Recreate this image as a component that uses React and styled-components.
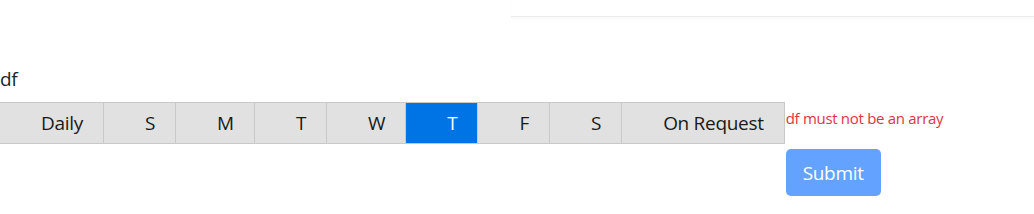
import styled, { createGlobalStyle } from 'styled-components';
import { useState } from 'react';

const GlobalStyle = createGlobalStyle`
    body {
        margin: 0;
        background: #fff;
        font-family: 'Open Sans', 'Liberation Sans', sans-serif;
        color: #212529;
    }
`;

const Header = styled.div`
    display: flex;
    justify-content: flex-end;
    height: 17px;
`;

const HeaderPanel = styled.div`
    width: 523px;
    height: 16px;
    background: #fff;
    border-bottom: 1px solid #ececec;
    box-shadow: 0 2px 2px rgba(0, 0, 0, 0.03);
`;

const Form = styled.form`
    display: flex;
    align-items: flex-start;
    margin-top: 48px;
`;

const Field = styled.div`
    display: flex;
    flex-direction: column;
`;

const Label = styled.label`
    font-size: 19px;
    line-height: 28px;
    height: 28px;
    margin-bottom: 9px;
    letter-spacing: -0.3px;
`;

const Group = styled.div`
    display: flex;
    margin-left: -1px;
`;

const Option = styled.button`
    height: 42px;
    box-sizing: border-box;
    margin: 0 -1px 0 0;
    padding: 0 20px 0 41px;
    border: 1px solid #c9c9c9;
    border-radius: 0;
    background: ${props => props.active ? '#0074e5' : '#e1e1e1'};
    color: ${props => props.active ? '#fff' : '#1a1a1a'};
    font-family: 'Open Sans', 'Liberation Sans', sans-serif;
    font-size: 19px;
    letter-spacing: -0.3px;
    display: flex;
    align-items: center;
    cursor: pointer;

    &:last-child {
        margin-right: 0;
    }
`;

const Side = styled.div`
    display: flex;
    flex-direction: column;
    align-items: flex-start;
    padding-top: 43px;
    margin-left: 1px;
`;

const Error = styled.div`
    color: #dc3545;
    font-size: 15px;
    line-height: 20px;
    letter-spacing: -0.3px;
`;

const Submit = styled.button`
    margin-top: 21px;
    height: 47px;
    width: 95px;
    border: none;
    border-radius: 5px;
    background: #63a3ff;
    color: #fff;
    font-family: 'Open Sans', 'Liberation Sans', sans-serif;
    font-size: 19px;
    letter-spacing: -0.3px;
    padding: 0;
`;

const options = ['Daily', 'S', 'M', 'T', 'W', 'T', 'F', 'S', 'On Request'];

const App = () => {
    const [selected, setSelected] = useState(5);

    return (
        <>
            <GlobalStyle />
            <Header>
                <HeaderPanel />
            </Header>
            <Form onSubmit={(e) => e.preventDefault()}>
                <Field>
                    <Label>df</Label>
                    <Group>
                        {options.map((opt, i) => (
                            <Option type="button" key={i} active={i === selected}
                                onClick={() => setSelected(i)}>
                                {opt}
                            </Option>
                        ))}
                    </Group>
                </Field>
                <Side>
                    <Error>df must not be an array</Error>
                    <Submit type="submit">Submit</Submit>
                </Side>
            </Form>
        </>
    );
};

export default App;
